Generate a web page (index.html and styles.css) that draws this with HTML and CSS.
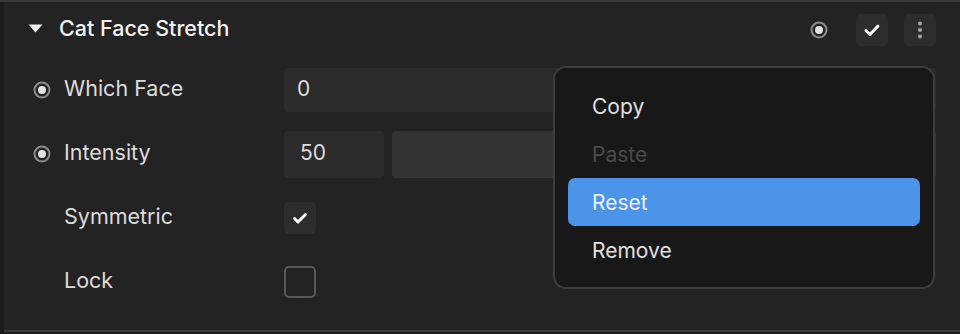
FILE: index.html
```html
<!DOCTYPE html>
<html>
<head>
<meta charset="utf-8">
<link rel="stylesheet" href="styles.css">
</head>
<body>
<div class="frame">
  <div class="gutter"></div>
  <div class="panel">
    <div class="header">
      <svg class="caret" width="15" height="9" viewBox="0 0 15 9"><path d="M0.5 0.5 H14.5 L7.5 8.5 Z" fill="#f2f2f2"/></svg>
      <div class="title">Cat Face Stretch</div>
      <div class="tools">
        <svg class="radio" width="18" height="18" viewBox="0 0 18 18"><circle cx="9" cy="9" r="7.5" fill="none" stroke="#8c8c8c" stroke-width="2"/><circle cx="9" cy="9" r="4" fill="#e2e2e2"/></svg>
        <div class="btn">
          <svg width="32" height="32" viewBox="0 0 32 32"><path d="M10 16.5 L14 20.5 L22 12" fill="none" stroke="#fff" stroke-width="3" stroke-linecap="round" stroke-linejoin="round"/></svg>
        </div>
        <div class="btn">
          <svg width="32" height="32" viewBox="0 0 32 32"><circle cx="16" cy="9.5" r="2" fill="#a8a8a8"/><circle cx="16" cy="16" r="2" fill="#a8a8a8"/><circle cx="16" cy="22.5" r="2" fill="#a8a8a8"/></svg>
        </div>
      </div>
    </div>
    <div class="rows">
      <div class="row">
        <div class="icon"><svg width="18" height="18" viewBox="0 0 18 18"><circle cx="9" cy="9" r="7.5" fill="none" stroke="#8c8c8c" stroke-width="2"/><circle cx="9" cy="9" r="4" fill="#e2e2e2"/></svg></div>
        <div class="label">Which Face</div>
        <div class="control"><div class="input wide">0</div></div>
      </div>
      <div class="row">
        <div class="icon"><svg width="18" height="18" viewBox="0 0 18 18"><circle cx="9" cy="9" r="7.5" fill="none" stroke="#8c8c8c" stroke-width="2"/><circle cx="9" cy="9" r="4" fill="#e2e2e2"/></svg></div>
        <div class="label">Intensity</div>
        <div class="control"><div class="input num">50</div><div class="track"></div></div>
      </div>
      <div class="row short">
        <div class="icon"></div>
        <div class="label">Symmetric</div>
        <div class="control"><div class="check on"><svg width="32" height="32" viewBox="0 0 32 32"><path d="M10.5 16.5 L14 20 L21.5 12.5" fill="none" stroke="#fff" stroke-width="3" stroke-linecap="round" stroke-linejoin="round"/></svg></div></div>
      </div>
      <div class="row short">
        <div class="icon"></div>
        <div class="label">Lock</div>
        <div class="control"><div class="check off"></div></div>
      </div>
    </div>
    <div class="menu">
      <div class="item">Copy</div>
      <div class="item disabled">Paste</div>
      <div class="item active">Reset</div>
      <div class="item">Remove</div>
    </div>
  </div>
</div>
</body>
</html>
```
FILE: styles.css
```css
html, body {
  margin: 0;
  padding: 0;
  background: #1c1c1c;
  font-family: Inter, "Noto Sans", sans-serif;
  color: #dcdcdc;
}
.frame {
  display: flex;
  border-top: 2px solid #393939;
  height: 330px;
}
.gutter {
  width: 4px;
  background: #1c1c1c;
}
.panel {
  position: relative;
  flex: 1;
  background: #232323;
  border-bottom: 2px solid #3a3a3a;
  padding: 12px 24px 0 24px;
  box-sizing: border-box;
}
.header {
  display: flex;
  align-items: center;
  height: 32px;
}
.caret {
  display: block;
  margin-top: -4px;
}
.title {
  margin-left: 16px;
  font-size: 21.5px;
  font-weight: 500;
  color: #f2f2f2;
  margin-top: -4px;
}
.tools {
  margin-left: auto;
  display: flex;
  align-items: center;
}
.radio {
  display: block;
  margin-right: 12px;
}
.btn {
  width: 32px;
  height: 32px;
  border-radius: 5px;
  background: #2d2d2d;
  margin-left: 16px;
}
.btn svg { display: block; }
.rows {
  display: flex;
  flex-direction: column;
  gap: 16px;
  margin-top: 20px;
}
.row {
  display: flex;
  align-items: center;
  height: 48px;
}
.icon {
  width: 36px;
  padding-left: 5px;
  box-sizing: border-box;
  display: flex;
  align-items: center;
}
.icon svg { display: block; }
.label {
  width: 220px;
  font-size: 21.5px;
  color: #dcdcdc;
  margin-top: -4px;
}
.control {
  flex: 1;
  display: flex;
  gap: 8px;
  align-items: center;
}
.input {
  height: 44px;
  background: #2b2b2b;
  border-radius: 4px;
  box-sizing: border-box;
  font-size: 21px;
  color: #dcdcdc;
  display: flex;
  align-items: center;
  padding-bottom: 4px;
}
.wide { flex: 1; padding-left: 13px; }
.num { width: 100px; padding-left: 16px; height: 47px; }
.track {
  flex: 1;
  height: 47px;
  background: #333333;
  border-radius: 4px;
}
.check {
  width: 32px;
  height: 32px;
  border-radius: 5px;
  box-sizing: border-box;
}
.check svg { display: block; }
.check.on { background: #2d2d2d; }
.check.off { border: 2px solid #595959; }
.menu {
  position: absolute;
  left: 549px;
  top: 64px;
  width: 382px;
  height: 223px;
  box-sizing: border-box;
  background: #181818;
  border: 2px solid #3d3d3d;
  border-radius: 13px;
  padding: 14px 13px;
}
.item {
  height: 48px;
  border-radius: 7px;
  padding-left: 24px;
  display: flex;
  align-items: center;
  font-size: 21px;
  color: #e0e0e0;
  box-sizing: border-box;
}
.item.disabled { color: #4a4a4a; }
.item.active { background: #4b94e7; color: #e8f1fd; }
```
